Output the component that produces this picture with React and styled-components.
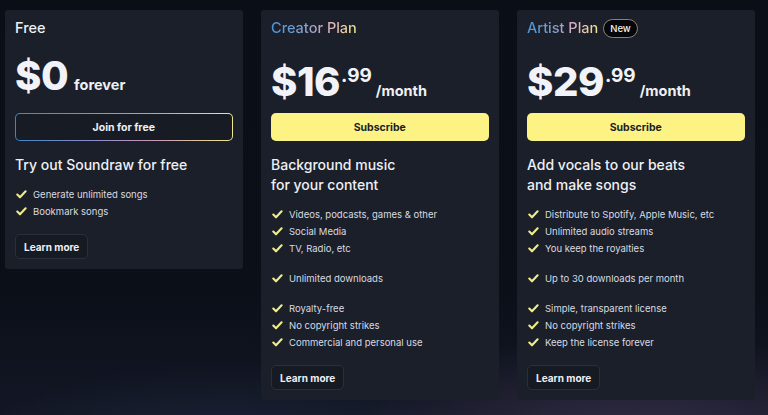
import React from 'react';
import styled, { createGlobalStyle, css } from 'styled-components';

const Global = createGlobalStyle`
  html, body {
    margin: 0;
    padding: 0;
    height: 100%;
    overflow: hidden;
  }
  body {
    font-family: Inter, 'Noto Sans', 'Liberation Sans', sans-serif;
    background: #0a0e16;
  }
`;

const Page = styled.div`
  width: 768px;
  height: 415px;
  box-sizing: border-box;
  padding: 10px 0 0 5px;
  display: flex;
  align-items: flex-start;
  gap: 18.5px;
  background:
    radial-gradient(ellipse 420px 170px at 640px 450px, rgba(78, 64, 96, 0.6), transparent 70%),
    radial-gradient(ellipse 380px 140px at 230px 460px, rgba(40, 52, 80, 0.45), transparent 70%),
    linear-gradient(180deg, #0a0e16 0%, #0b0f18 70%, #131725 100%);
`;

const Card = styled.section`
  width: 237.5px;
  box-sizing: border-box;
  padding: 8px 10px 10px;
  background: #1b1f29;
  border-radius: 3px;
  color: #eef0f5;
`;

const TitleRow = styled.div`
  display: flex;
  align-items: center;
  gap: 5px;
  height: 20px;
`;

const Title = styled.h2`
  margin: 0;
  font-size: 14.5px;
  font-weight: 500;
  line-height: 20px;
  color: #eef0f5;
  ${({ $gradient }) =>
    $gradient &&
    css`
      background: linear-gradient(90deg, #4795d6 0%, #86a0cf 40%, #d0a8c6 62%, #e7c3b0 80%, #f2e58c 100%);
      -webkit-background-clip: text;
      background-clip: text;
      color: transparent;
    `}
`;

const Badge = styled.span`
  display: inline-flex;
  align-items: center;
  height: 17px;
  padding: 0 6px;
  border-radius: 10px;
  background: #05070b;
  border: 1px solid #8a8474;
  color: #f2f2f2;
  font-size: 9.5px;
  font-weight: 500;
`;

const PriceRow = styled.div`
  display: flex;
  align-items: baseline;
  margin-top: 14px;
  height: 48px;
`;

const Amount = styled.span`
  font-size: 40px;
  font-weight: 800;
  line-height: 48px;
  letter-spacing: -0.5px;
  color: #f1f3f8;
`;

const Cents = styled.sup`
  font-size: 19px;
  font-weight: 700;
  vertical-align: 14px;
  letter-spacing: 0;
  margin-left: 1px;
`;

const Period = styled.span`
  margin-left: ${({ $gap }) => $gap}px;
  font-size: 14.5px;
  font-weight: 700;
  color: #eef0f5;
`;

const Button = styled.button`
  display: block;
  width: 100%;
  height: 28px;
  margin-top: 13px;
  border-radius: 5px;
  font-family: inherit;
  font-size: 10.5px;
  font-weight: 700;
  cursor: pointer;
  ${({ $variant }) =>
    $variant === 'outline'
      ? css`
          border: 1.5px solid transparent;
          color: #eef0f5;
          background:
            linear-gradient(#171b24, #171b24) padding-box,
            linear-gradient(90deg, #3f86c6 0%, #8c8cc8 35%, #c99ab8 65%, #efe88a 100%) border-box;
        `
      : css`
          border: none;
          color: #1b1d22;
          background: #fdf384;
        `}
`;

const Heading = styled.h3`
  margin: 14px 0 0;
  font-size: 14px;
  font-weight: 500;
  line-height: 20px;
  color: #eef0f5;
`;

const Features = styled.div`
  margin-top: 11px;
  display: flex;
  flex-direction: column;
  gap: 13px;
`;

const Group = styled.ul`
  list-style: none;
  margin: 0;
  padding: 0;
`;

const Item = styled.li`
  display: flex;
  align-items: center;
  gap: 6px;
  height: 17px;
  padding-left: 1px;
  font-size: 9.5px;
  color: #d8dbe2;
`;

const LearnMore = styled.button`
  display: block;
  margin-top: 14px;
  height: 25px;
  padding: 0 8px;
  border: 1px solid #2a2f3a;
  border-radius: 5px;
  background: #161a23;
  color: #eef0f5;
  font-family: inherit;
  font-size: 10px;
  font-weight: 700;
  cursor: pointer;
`;

const Check = () => (
  <svg width="11" height="9" viewBox="0 0 11 9" fill="none">
    <path
      d="M1.3 4.6 L4 7.3 L9.6 1.3"
      stroke="#f1ec8a"
      strokeWidth="2.1"
      strokeLinecap="round"
      strokeLinejoin="round"
    />
  </svg>
);

const plans = [
  {
    title: 'Free',
    amount: '$0',
    period: 'forever',
    periodGap: 6,
    button: 'Join for free',
    variant: 'outline',
    heading: ['Try out Soundraw for free'],
    groups: [['Generate unlimited songs', 'Bookmark songs']],
  },
  {
    title: 'Creator Plan',
    gradient: true,
    amount: '$16',
    cents: '.99',
    period: '/month',
    periodGap: 4,
    button: 'Subscribe',
    heading: ['Background music', 'for your content'],
    groups: [
      ['Videos, podcasts, games & other', 'Social Media', 'TV, Radio, etc'],
      ['Unlimited downloads'],
      ['Royalty-free', 'No copyright strikes', 'Commercial and personal use'],
    ],
  },
  {
    title: 'Artist Plan',
    gradient: true,
    badge: 'New',
    amount: '$29',
    cents: '.99',
    period: '/month',
    periodGap: 4,
    button: 'Subscribe',
    heading: ['Add vocals to our beats', 'and make songs'],
    groups: [
      ['Distribute to Spotify, Apple Music, etc', 'Unlimited audio streams', 'You keep the royalties'],
      ['Up to 30 downloads per month'],
      ['Simple, transparent license', 'No copyright strikes', 'Keep the license forever'],
    ],
  },
];

const PlanCard = ({ plan }) => (
  <Card>
    <TitleRow>
      <Title $gradient={plan.gradient}>{plan.title}</Title>
      {plan.badge && <Badge>{plan.badge}</Badge>}
    </TitleRow>
    <PriceRow>
      <Amount>
        {plan.amount}
        {plan.cents && <Cents>{plan.cents}</Cents>}
      </Amount>
      <Period $gap={plan.periodGap}>{plan.period}</Period>
    </PriceRow>
    <Button $variant={plan.variant}>{plan.button}</Button>
    <Heading>
      {plan.heading.map((line, i) => (
        <React.Fragment key={line}>
          {i > 0 && <br />}
          {line}
        </React.Fragment>
      ))}
    </Heading>
    <Features>
      {plan.groups.map((group, gi) => (
        <Group key={gi}>
          {group.map((f) => (
            <Item key={f}>
              <Check />
              {f}
            </Item>
          ))}
        </Group>
      ))}
    </Features>
    <LearnMore>Learn more</LearnMore>
  </Card>
);

const App = () => (
  <>
    <Global />
    <Page>
      {plans.map((p) => (
        <PlanCard key={p.title} plan={p} />
      ))}
    </Page>
  </>
);

export default App;
